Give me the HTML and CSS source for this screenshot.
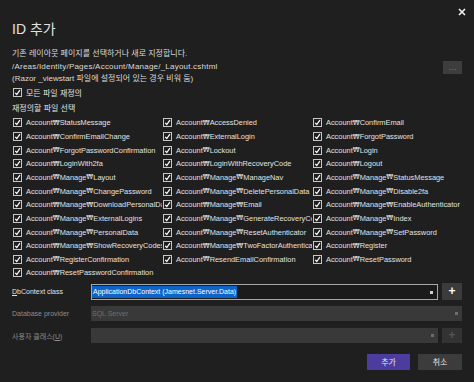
FILE: index.html
```html
<!DOCTYPE html>
<html lang="ko">

<head>
  <meta charset="UTF-8">
  <title>ID 추가</title>
  <link rel="stylesheet" href="styles.css">
</head>

<body>
  <div class="dialog">
    <!-- 제목 -->
    <div class="header">
      <h1 class="title">ID 추가</h1>
      <span class="close">
        <svg width="8" height="8" viewBox="0 0 8 8"><path d="M1 1L7 7M7 1L1 7" stroke="#f2f2f2" stroke-width="1.6"/></svg>
      </span>
    </div>

    <!-- 레이아웃 -->
    <div class="layout-row">
      <div class="desc">
        <p>기존 레이아웃 페이지를 선택하거나 새로 지정합니다.</p>
        <p class="path">/Areas/Identity/Pages/Account/Manage/_Layout.cshtml</p>
        <p>(Razor _viewstart 파일에 설정되어 있는 경우 비워 둠)</p>
      </div>
      <span class="browse">…</span>
    </div>

    <label class="check-row"><span class="box"></span>모든 파일 재정의</label>
    <div class="section-label">재정의할 파일 선택</div>

    <!-- 파일 목록 -->
    <div class="file-grid" id="fileGrid"></div>

    <!-- 옵션 -->
    <div class="form">
      <span class="label"><u>D</u>bContext class</span>
      <div class="field active"><span class="selected">ApplicationDbContext (Jamesnet.Server.Data)</span><span class="arrow"></span></div>
      <span class="add-btn">+</span>

      <span class="label dim">Database provider</span>
      <div class="field disabled wide">SQL Server<span class="arrow"></span></div>

      <span class="label dim">사용자 클래스(<u>U</u>)</span>
      <div class="field disabled"><span class="arrow"></span></div>
      <span class="add-btn off">+</span>
    </div>

    <div class="footer">
      <button class="btn primary">추가</button>
      <button class="btn">취소</button>
    </div>
  </div>

  <script src="script.js"></script>
</body>

</html>
```

FILE: styles.css
```css
* {
  margin: 0;
  padding: 0;
  box-sizing: border-box;
}

body {
  background-color: #1f1f1f;
  color: #e2e2e2;
  font-family: "Liberation Sans", "DejaVu Sans", "Noto Sans CJK KR", sans-serif;
  font-size: 8px;
}

.dialog {
  padding: 0 12px;
  width: 474px;
  height: 382px;
}

/* 제목 */
.header {
  display: flex;
  justify-content: space-between;
  align-items: flex-start;
}

.title {
  font-size: 14px;
  font-weight: normal;
  line-height: 18px;
  margin-top: 20px;
}

.close {
  margin-top: 8px;
  margin-right: -4px;
  display: flex;
}

.layout-row {
  display: flex;
  justify-content: space-between;
  align-items: center;
  margin-top: 10px;
}

.desc p {
  line-height: 12.7px;
  color: #dadada;
}

.desc .path {
  letter-spacing: 0.22px;
}

.browse {
  width: 19px;
  height: 13px;
  background-color: #3d3d3d;
  color: #9a9a9a;
  font-size: 8px;
  line-height: 13px;
  text-align: center;
}

.check-row {
  display: flex;
  align-items: center;
  height: 13px;
  margin-left: 1px;
}

.box {
  width: 9px;
  height: 9px;
  border: 1px solid #c6c6c6;
  background-color: #1f1f1f;
  margin-right: 4px;
  flex-shrink: 0;
  background-image: url("data:image/svg+xml,%3Csvg xmlns='http://www.w3.org/2000/svg' viewBox='0 0 7 7'%3E%3Cpath d='M1.2 3.8L2.8 5.5L5.9 1.2' fill='none' stroke='white' stroke-width='1.2'/%3E%3C/svg%3E");
  background-size: 7px 7px;
  background-repeat: no-repeat;
}

.section-label {
  line-height: 13px;
  margin-top: 3px;
}

/* 파일 목록 */
.file-grid {
  display: grid;
  grid-template-columns: 150px 150px 150px;
  grid-auto-rows: 13.65px;
  margin-top: 1px;
  font-size: 7.4px;
}

.file-grid .item {
  display: flex;
  align-items: center;
  margin-left: 1px;
  white-space: nowrap;
  overflow: hidden;
}

.file-grid .won {
  font-family: "DejaVu Sans", sans-serif;
  font-size: 7px;
}

/* 옵션 */
.form {
  display: grid;
  grid-template-columns: 75px 1fr 20px;
  grid-auto-rows: 16px;
  column-gap: 4px;
  row-gap: 6px;
  margin-top: 4px;
  align-items: center;
  font-size: 7px;
}

.label.dim {
  color: #8c8c8c;
}

.field {
  position: relative;
  height: 16px;
  display: flex;
  align-items: center;
}

.field.active {
  border: 1px solid #a8a8a8;
  background-color: #1b1b1b;
}

.field.disabled {
  background-color: #393939;
  color: #6e6e6e;
  height: 15px;
  padding-left: 1px;
}

.field.wide {
  grid-column: 2 / 4;
}

.selected {
  background-color: #0e64c8;
  color: #fff;
  padding: 0 1px;
  line-height: 12px;
}

.arrow {
  position: absolute;
  right: 4px;
  top: 6px;
  width: 3px;
  height: 3px;
  background-color: #d0d0d0;
}

.disabled .arrow {
  background-color: #6c6c6c;
}

.add-btn {
  height: 17px;
  background-color: #3b3b3b;
  color: #fff;
  font-size: 12px;
  line-height: 17px;
  text-align: center;
  font-weight: bold;
}

.add-btn.off {
  height: 15px;
  line-height: 15px;
  background-color: #333;
  color: #555;
}

.footer {
  display: flex;
  justify-content: flex-end;
  gap: 8px;
  margin-top: 10px;
}

.btn {
  width: 44px;
  height: 16px;
  border: none;
  background-color: #3c3c3c;
  color: #e6e6e6;
  font-family: "Noto Sans CJK KR", sans-serif;
  font-size: 8px;
}

.btn.primary {
  background-color: #4b3c9e;
  width: 43px;
}
```

FILE: script.js
```js
// 재정의할 파일 목록
const files = [
  'StatusMessage', 'AccessDenied', 'ConfirmEmail',
  'ConfirmEmailChange', 'ExternalLogin', 'ForgotPassword',
  'ForgotPasswordConfirmation', 'Lockout', 'Login',
  'LoginWith2fa', 'LoginWithRecoveryCode', 'Logout',
  'Manage₩Layout', 'Manage₩ManageNav', 'Manage₩StatusMessage',
  'Manage₩ChangePassword', 'Manage₩DeletePersonalData', 'Manage₩Disable2fa',
  'Manage₩DownloadPersonalData', 'Manage₩Email', 'Manage₩EnableAuthenticator',
  'Manage₩ExternalLogins', 'Manage₩GenerateRecoveryCodes', 'Manage₩Index',
  'Manage₩PersonalData', 'Manage₩ResetAuthenticator', 'Manage₩SetPassword',
  'Manage₩ShowRecoveryCodes', 'Manage₩TwoFactorAuthentication', 'Register',
  'RegisterConfirmation', 'ResendEmailConfirmation', 'ResetPassword',
  'ResetPasswordConfirmation'
];

const grid = document.getElementById('fileGrid');
files.forEach(function (name) {
  const item = document.createElement('label');
  item.className = 'item';
  const box = document.createElement('span');
  box.className = 'box';
  item.appendChild(box);
  // ₩ 기호만 좁은 글꼴로 표시
  ('Account₩' + name).split('₩').forEach(function (part, i) {
    if (i > 0) {
      const won = document.createElement('span');
      won.className = 'won';
      won.textContent = '₩';
      item.appendChild(won);
    }
    item.appendChild(document.createTextNode(part));
  });
  grid.appendChild(item);
});
```
